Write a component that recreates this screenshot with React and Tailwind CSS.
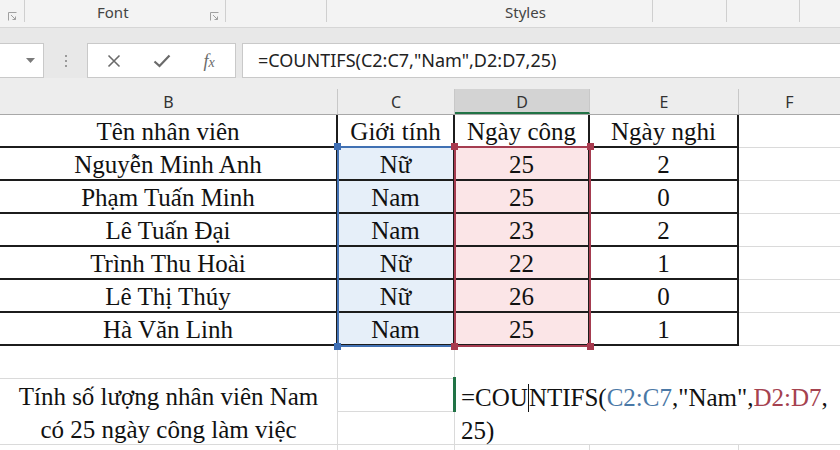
import React from 'react';

const ui = { fontFamily: '"Noto Sans", "Open Sans", sans-serif' };
const serif = { fontFamily: '"Liberation Serif", "Times New Roman", serif' };

const rows = [
  ['Nguyễn Minh Anh', 'Nữ', '25', '2'],
  ['Phạm Tuấn Minh', 'Nam', '25', '0'],
  ['Lê Tuấn Đại', 'Nam', '23', '2'],
  ['Trình Thu Hoài', 'Nữ', '22', '1'],
  ['Lê Thị Thúy', 'Nữ', '26', '0'],
  ['Hà Văn Linh', 'Nam', '25', '1'],
];

const Cell = ({ children, className = '' }) => (
  <div className={'flex items-center justify-center whitespace-nowrap overflow-visible pt-[3px] ' + className}>
    {children}
  </div>
);

const Launcher = () => (
  <svg width="9" height="9" viewBox="0 0 9 9" className="text-[#a0a0a0]">
    <path d="M0.5 8.5V0.5H8.5" fill="none" stroke="currentColor" />
    <path d="M3 3L7.5 7.5M7.5 4.5V7.5H4.5" fill="none" stroke="currentColor" />
  </svg>
);

const Ribbon = () => (
  <div className="h-[28px] bg-[#f3f3f3] border-b border-[#d6d6d6] flex text-[15px] text-[#444]" style={ui}>
    <div className="w-[25px] border-r border-[#cfcfcf] mb-[5px] flex items-end justify-center pb-[1px]">
      <Launcher />
    </div>
    <div className="w-[201px] border-r border-[#cfcfcf] mb-[5px] flex items-end pl-[72px] pr-[6px] justify-between">
      <span className="leading-none pb-[2px]">Font</span>
      <span className="pb-[1px]"><Launcher /></span>
    </div>
    <div className="w-[101px] border-r border-[#cfcfcf] mb-[5px]" />
    <div className="w-[326px] border-r border-[#cfcfcf] mb-[5px] flex items-end pl-[178px]">
      <span className="leading-none pb-[2px]">Styles</span>
    </div>
    <div className="w-[74px] border-r border-[#cfcfcf] mb-[5px]" />
    <div className="w-[73px] border-r border-[#cfcfcf] mb-[5px]" />
    <div className="flex-1" />
  </div>
);

const FormulaBar = () => (
  <div className="h-[35px] bg-[#e8e8e8] flex" style={ui}>
    <div className="w-[44px] bg-white border border-l-0 border-[#c9c9c9] flex items-center justify-end pr-[8px]">
      <svg width="9" height="5" viewBox="0 0 9 5">
        <path d="M0 0H9L4.5 5Z" fill="#7a7a7a" />
      </svg>
    </div>
    <div className="w-[43px] flex flex-col items-center justify-center gap-[3px]">
      <span className="w-[2px] h-[2px] bg-[#9a9a9a]" />
      <span className="w-[2px] h-[2px] bg-[#9a9a9a]" />
      <span className="w-[2px] h-[2px] bg-[#9a9a9a]" />
    </div>
    <div className="w-[149px] bg-white border border-[#c9c9c9] flex items-center">
      <div className="w-[52px] flex justify-center">
        <svg width="14" height="14" viewBox="0 0 14 14">
          <path d="M1.5 1.5L12.5 12.5M12.5 1.5L1.5 12.5" stroke="#6a6a6a" strokeWidth="1.6" />
        </svg>
      </div>
      <div className="w-[44px] flex justify-center">
        <svg width="18" height="14" viewBox="0 0 18 14">
          <path d="M1.5 7.5L6.5 12L16.5 1.5" fill="none" stroke="#6a6a6a" strokeWidth="2.2" />
        </svg>
      </div>
      <div className="w-[50px] flex justify-center text-[#6a6a6a] italic" style={serif}>
        <span className="text-[18px] leading-none">f</span>
        <span className="text-[14px] leading-none mt-[4px]">x</span>
      </div>
    </div>
    <div className="w-[6px]" />
    <div className="flex-1 bg-white border border-r-0 border-[#c9c9c9] flex items-center pl-[15px] text-[18px] text-[#222]">
      =COUNTIFS(C2:C7,"Nam",D2:D7,25)
    </div>
  </div>
);

const ColumnHeaders = () => (
  <div className="h-[37px] bg-[#ededed] pt-[11px] border-b border-[#a8a8a8] flex text-[16px] text-[#333]" style={ui}>
    <div className="w-[338px] border-r border-[#c8c8c8] flex items-center justify-center">B</div>
    <div className="w-[117px] border-r border-[#c8c8c8] flex items-center justify-center">C</div>
    <div className="w-[135px] border-r border-[#c8c8c8] bg-[#d3d3d3] border-b-2 border-b-[#217346] flex items-center justify-center pt-[2px]">D</div>
    <div className="w-[149px] border-r border-[#c8c8c8] flex items-center justify-center">E</div>
    <div className="flex-1 flex items-center justify-center">F</div>
  </div>
);

const Handle = ({ className }) => <div className={'absolute w-[7px] h-[7px] ' + className} />;

const Sheet = () => (
  <div className="relative flex-1 overflow-hidden text-[25px] text-[#111]" style={serif}>
    <div className="grid grid-cols-[338px_117px_135px_149px_101px] auto-rows-[33px]">
      <Cell className="border-r-2 border-b-2 border-[#1c1c1c]">Tên nhân viên</Cell>
      <Cell className="border-r-2 border-b-2 border-[#1c1c1c]">Giới tính</Cell>
      <Cell className="border-r-2 border-b-2 border-[#1c1c1c]">Ngày công</Cell>
      <Cell className="border-r-2 border-b-2 border-[#1c1c1c]">Ngày nghi</Cell>
      <Cell className="border-b border-[#dadada]" />

      {rows.map((r) => (
        <React.Fragment key={r[0]}>
          <Cell className="border-r-2 border-b-2 border-[#1c1c1c]">{r[0]}</Cell>
          <Cell className="bg-[#e6eff9] border-r-2 border-b-2 border-[#1c1c1c]">{r[1]}</Cell>
          <Cell className="bg-[#fbe5e7] border-r-2 border-b-2 border-[#1c1c1c]">{r[2]}</Cell>
          <Cell className="border-r-2 border-b-2 border-[#1c1c1c]">{r[3]}</Cell>
          <Cell className="border-b border-[#dadada]" />
        </React.Fragment>
      ))}

      <Cell className="border-r border-b border-[#dadada]" />
      <Cell className="border-r border-b border-[#dadada]" />
      <div className="col-span-3 row-span-3 border-b border-[#dadada] relative pl-[6px] pt-[35px]">
        <div className="absolute left-[-2px] top-[31px] w-[3px] h-[35px] bg-[#217346]" />
        <div className="h-[33px] leading-[33px] whitespace-nowrap">
          =COU
          <span className="inline-block w-px h-[28px] bg-[#111] align-[-6px]" />
          NTIFS(<span className="text-[#4a78a6]">C2:C7</span>,"Nam",<span className="text-[#a5424f]">D2:D7</span>,
        </div>
        <div className="h-[33px] leading-[33px] whitespace-nowrap">25)</div>
      </div>
      <Cell className="row-span-2 flex-col border-r border-b border-[#dadada] leading-[33px]">
        <span>Tính số lượng nhân viên Nam</span>
        <span>có 25 ngày công làm việc</span>
      </Cell>
      <Cell className="border-r border-b border-[#dadada]" />
      <Cell className="border-r border-b border-[#dadada]" />

      <Cell className="border-r border-b border-[#dadada]" />
      <Cell className="border-r border-b border-[#dadada]" />
      <Cell className="border-r border-b border-[#dadada]" />
      <Cell className="border-r border-b border-[#dadada]" />
      <Cell className="border-b border-[#dadada]" />
    </div>

    {/* range highlights from the formula being edited */}
    <div className="absolute left-[337px] top-[31px] w-[119px] h-[201px] border-2 border-[#4171b3] pointer-events-none" />
    <div className="absolute left-[454px] top-[31px] w-[137px] h-[201px] border-2 border-[#a53c50] pointer-events-none" />
    <Handle className="left-[334px] top-[28px] bg-[#3f6fb5]" />
    <Handle className="left-[334px] top-[228px] bg-[#3f6fb5]" />
    <Handle className="left-[451px] top-[28px] bg-[#a83a4e]" />
    <Handle className="left-[587px] top-[28px] bg-[#a83a4e]" />
    <Handle className="left-[451px] top-[228px] bg-[#a83a4e]" />
    <Handle className="left-[587px] top-[228px] bg-[#a83a4e]" />
  </div>
);

export default function App() {
  return (
    <div className="w-[840px] h-[450px] overflow-hidden bg-white flex flex-col">
      <Ribbon />
      <div className="h-[15px] bg-[#e8e8e8]" />
      <FormulaBar />
      <ColumnHeaders />
      <Sheet />
    </div>
  );
}
